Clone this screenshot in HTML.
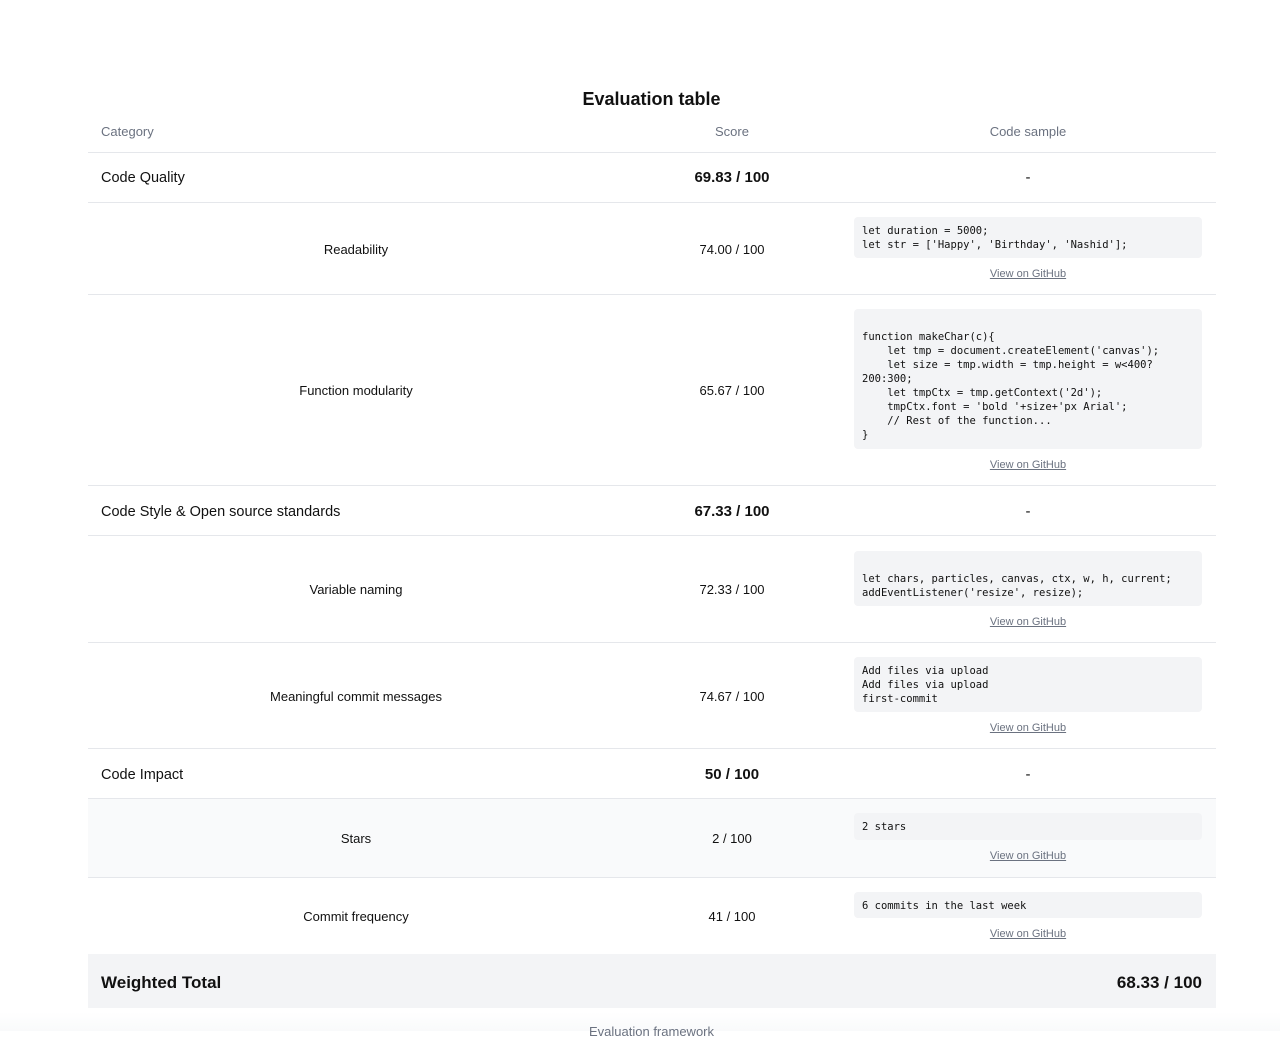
<!DOCTYPE html>
<html><head><meta charset="utf-8"><style>
*{margin:0;padding:0;box-sizing:border-box}
body{width:1280px;height:1031px;background:#fff;font-family:"Liberation Sans",sans-serif;color:#111;position:relative;overflow:hidden}
.a{position:absolute;white-space:pre}
.c{text-align:center}
.line{position:absolute;left:88px;width:1128px;height:1px;background:#e5e7eb}
.th{font-size:13px;color:#6b7280;line-height:16px}
.cat{font-size:14.5px;line-height:18px;left:101px}
.sub{font-size:13px;line-height:16px;left:88px;width:536px;text-align:center}
.sc{font-size:13px;line-height:16px;left:632px;width:200px;text-align:center}
.scb{font-size:15px;line-height:18px;font-weight:bold;left:632px;width:200px;text-align:center}
.dash{font-size:15px;line-height:18px;left:928px;width:200px;text-align:center}
.code{position:absolute;left:854px;width:348px;background:#f3f4f6;border-radius:4px;font-family:"DejaVu Sans Mono","Liberation Mono",monospace;font-size:10.5px;line-height:14px;padding:7px 8px 6px;white-space:pre;color:#111}
.gh{position:absolute;left:928px;width:200px;text-align:center;font-size:11px;line-height:14px;color:#6b7280;text-decoration:underline}
</style></head><body>
<div class="a c" style="left:0;width:1303px;top:88px;font-size:18px;line-height:22px;font-weight:bold">Evaluation table</div>
<div class="a th" style="left:101px;top:124px">Category</div>
<div class="a th c" style="left:632px;width:200px;top:124px">Score</div>
<div class="a th c" style="left:928px;width:200px;top:124px">Code sample</div>
<div class="line" style="top:152px"></div>

<div class="a cat" style="top:169px">Code Quality</div>
<div class="a scb" style="top:169px">69.83 / 100</div>
<div class="a dash" style="top:169px">-</div>
<div class="line" style="top:202px"></div>

<div class="a sub" style="top:242px">Readability</div>
<div class="a sc" style="top:242px">74.00 / 100</div>
<div class="code" style="top:217px;height:41px">let duration = 5000;
let str = ['Happy', 'Birthday', 'Nashid'];</div>
<div class="gh" style="top:267px">View on GitHub</div>
<div class="line" style="top:294px"></div>

<div class="a sub" style="top:383px">Function modularity</div>
<div class="a sc" style="top:383px">65.67 / 100</div>
<div class="code" style="top:309px;height:140px">
function makeChar(c){
    let tmp = document.createElement('canvas');
    let size = tmp.width = tmp.height = w&lt;400?
200:300;
    let tmpCtx = tmp.getContext('2d');
    tmpCtx.font = 'bold '+size+'px Arial';
    // Rest of the function...
}</div>
<div class="gh" style="top:458px">View on GitHub</div>
<div class="line" style="top:485px"></div>

<div class="a cat" style="top:503px">Code Style &amp; Open source standards</div>
<div class="a scb" style="top:503px">67.33 / 100</div>
<div class="a dash" style="top:503px">-</div>
<div class="line" style="top:535px"></div>

<div class="a sub" style="top:582px">Variable naming</div>
<div class="a sc" style="top:582px">72.33 / 100</div>
<div class="code" style="top:551px;height:55px">
let chars, particles, canvas, ctx, w, h, current;
addEventListener('resize', resize);</div>
<div class="gh" style="top:615px">View on GitHub</div>
<div class="line" style="top:642px"></div>

<div class="a sub" style="top:689px">Meaningful commit messages</div>
<div class="a sc" style="top:689px">74.67 / 100</div>
<div class="code" style="top:657px;height:55px">Add files via upload
Add files via upload
first-commit</div>
<div class="gh" style="top:721px">View on GitHub</div>
<div class="line" style="top:748px"></div>

<div class="a cat" style="top:766px">Code Impact</div>
<div class="a scb" style="top:766px">50 / 100</div>
<div class="a dash" style="top:766px">-</div>
<div class="line" style="top:798px"></div>

<div style="position:absolute;left:88px;top:799px;width:1128px;height:78px;background:#f9fafb"></div>
<div class="a sub" style="top:831px">Stars</div>
<div class="a sc" style="top:831px">2 / 100</div>
<div class="code" style="top:813px;height:27px">2 stars</div>
<div class="gh" style="top:849px">View on GitHub</div>
<div class="line" style="top:877px"></div>

<div class="a sub" style="top:909px">Commit frequency</div>
<div class="a sc" style="top:909px">41 / 100</div>
<div class="code" style="top:892px;height:26px">6 commits in the last week</div>
<div class="gh" style="top:927px">View on GitHub</div>

<div style="position:absolute;left:88px;top:954px;width:1128px;height:54px;background:#f3f4f6"></div>
<div class="a" style="left:101px;top:972px;font-size:17px;line-height:21px;font-weight:bold">Weighted Total</div>
<div class="a" style="left:1000px;width:202px;text-align:right;top:972px;font-size:17px;line-height:21px;font-weight:bold">68.33 / 100</div>

<div style="position:absolute;left:0;top:1012px;width:1280px;height:19px;background:linear-gradient(#fff,#f9fafb)"></div>
<div class="a c" style="left:0;width:1303px;top:1024px;font-size:13px;line-height:16px;color:#6b7280">Evaluation framework</div>
</body></html>
